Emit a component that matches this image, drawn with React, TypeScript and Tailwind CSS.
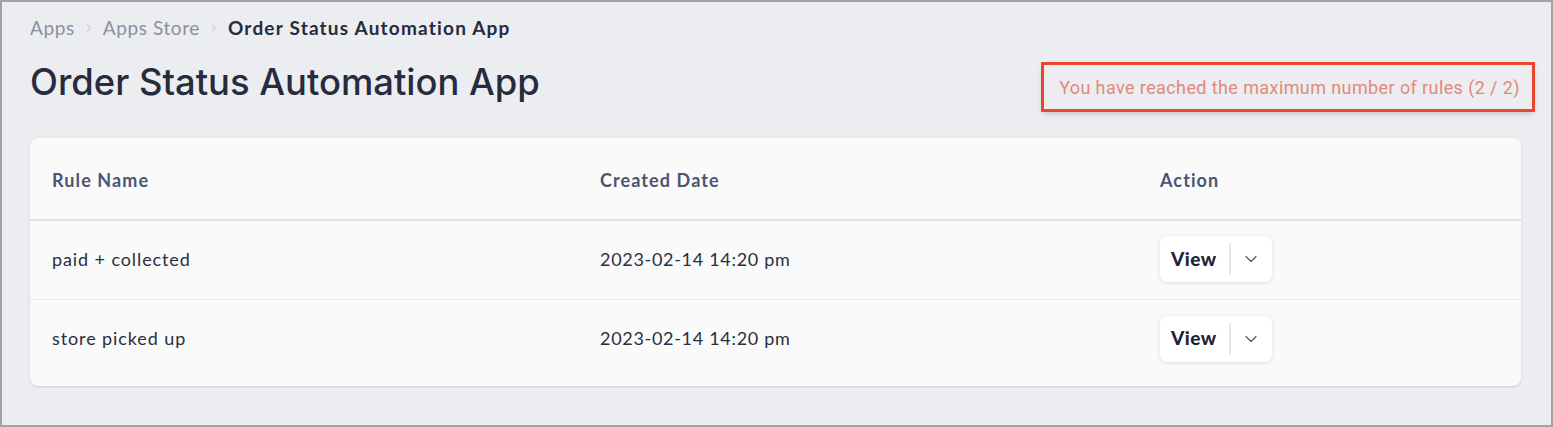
import { ChevronDown, ChevronRight } from "lucide-react";

const rules = [
  { name: "paid + collected", created: "2023-02-14 14:20 pm" },
  { name: "store picked up", created: "2023-02-14 14:20 pm" },
];

const body = { fontFamily: "Lato, 'Noto Sans', sans-serif" };

const App = () => {
  return (
    <div className="w-[1553px] h-[427px] border-2 border-[#a3a3a6] bg-[#ecedf0] overflow-hidden">
      <div className="px-[28px] pt-[14px]">
        <nav className="flex items-center gap-[8px] text-[19px] h-[24px]" style={body}>
          <span className="text-[#8a90a3] tracking-[0.6px]">Apps</span>
          <ChevronRight className="w-[12px] h-[12px] text-[#b5b9c6]" />
          <span className="text-[#8a90a3] tracking-[0.6px]">Apps Store</span>
          <ChevronRight className="w-[12px] h-[12px] text-[#b5b9c6]" />
          <span className="text-[#262b3d] font-bold tracking-[1.2px]">Order Status Automation App</span>
        </nav>

        <div className="flex items-start justify-between mt-[20px]">
          <h1
            className="text-[36.4px] font-medium text-[#262b3d] leading-[44px]"
            style={{ fontFamily: "Inter, Roboto, sans-serif" }}
          >
            Order Status Automation App
          </h1>
          <div className="mt-[2px] mr-[-12px] border-[3px] border-[#e8462d] shadow-md pl-[15px] pr-[12px] h-[50px] flex items-center">
            <span
              className="text-[18px] text-[#e3887b] tracking-[0.4px]"
              style={{ fontFamily: "Roboto, sans-serif" }}
            >
              You have reached the maximum number of rules (2 / 2)
            </span>
          </div>
        </div>

        <div className="mt-[26px] bg-[#fafafa] rounded-[8px] shadow-sm w-[1491px] pb-[7px]" style={body}>
          <div className="grid grid-cols-[548px_560px_1fr] h-[83px] pt-[3px] items-center border-b-2 border-[#dde1ea]">
            {["Rule Name", "Created Date", "Action"].map((h) => (
              <div key={h} className="pl-[22px] text-[18px] font-bold text-[#4a5572] tracking-[1.1px]">
                {h}
              </div>
            ))}
          </div>
          {rules.map((r, i) => (
            <div
              key={i}
              className={`grid grid-cols-[548px_560px_1fr] h-[79px] pb-[2px] items-center ${
                i < rules.length - 1 ? "border-b border-[#e6e8ee]" : ""
              }`}
            >
              <div className="pl-[22px] text-[18px] text-[#2a2f3f] tracking-[0.9px]">{r.name}</div>
              <div className="pl-[22px] text-[18px] text-[#2a2f3f] tracking-[0.7px]">{r.created}</div>
              <div className="pl-[22px]">
                <div className="inline-flex items-center h-[46px] bg-white rounded-[8px] shadow-[0_1px_4px_rgba(0,0,0,0.12)]">
                  <span className="pl-[11px] pr-[12px] text-[19px] font-black text-[#1e2335] tracking-[0.5px]">View</span>
                  <span className="w-[2px] h-[32px] bg-[#e4e6eb]" />
                  <span className="w-[41px] flex items-center justify-center">
                    <ChevronDown className="w-[20px] h-[20px] text-[#4a5572]" strokeWidth={1.4} />
                  </span>
                </div>
              </div>
            </div>
          ))}
        </div>
      </div>
    </div>
  );
};

export default App;
